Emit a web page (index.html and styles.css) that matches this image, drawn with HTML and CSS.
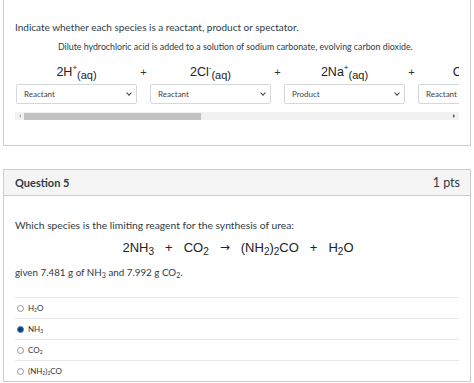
FILE: index.html
```html
<!DOCTYPE html>
<html lang="en">
<head>
<meta charset="utf-8">
<title>Quiz</title>
<link rel="stylesheet" href="styles.css">
</head>
<body class="page">
  <section class="card card-top">
    <p class="prompt">Indicate whether each species is a reactant, product or spectator.</p>
    <p class="scenario">Dilute hydrochloric acid is added to a solution of sodium carbonate, evolving carbon dioxide.</p>
    <div class="scroller">
      <div class="eq-row">
        <div class="col">
          <div class="term">2H<span class="sp">+</span><span class="sb">(aq)</span></div>
          <div class="select"><span>Reactant</span><span class="chev"></span></div>
        </div>
        <div class="op">+</div>
        <div class="col">
          <div class="term">2Cl<span class="sp">-</span><span class="sb">(aq)</span></div>
          <div class="select"><span>Reactant</span><span class="chev"></span></div>
        </div>
        <div class="op">+</div>
        <div class="col">
          <div class="term">2Na<span class="sp">+</span><span class="sb">(aq)</span></div>
          <div class="select"><span>Product</span><span class="chev"></span></div>
        </div>
        <div class="op">+</div>
        <div class="col">
          <div class="term">CO<span class="sb">3</span><span class="sp">2-</span><span class="sb">(aq)</span></div>
          <div class="select"><span>Reactant</span><span class="chev"></span></div>
        </div>
        <div class="op">→</div>
        <div class="col">
          <div class="term">2Na<span class="sp">+</span><span class="sb">(aq)</span></div>
          <div class="select"><span>Spectator</span><span class="chev"></span></div>
        </div>
      </div>
    </div>
    <div class="scrollbar">
      <span class="arrow arrow-left"></span>
      <span class="thumb"></span>
      <span class="track-fill"></span>
      <span class="arrow arrow-right"></span>
    </div>
  </section>

  <section class="card card-q">
    <header class="q-header">
      <h2 class="q-title">Question 5</h2>
      <span class="q-pts">1 pts</span>
    </header>
    <div class="q-body">
      <p class="q-text">Which species is the limiting reagent for the synthesis of urea:</p>
      <div class="equation">
        <span>2NH<span class="esub">3</span></span>
        <span>+</span>
        <span>CO<span class="esub">2</span></span>
        <span class="yields">→</span>
        <span>(NH<span class="esub">2</span>)<span class="esub">2</span>CO</span>
        <span>+</span>
        <span>H<span class="esub">2</span>O</span>
      </div>
      <p class="given">given 7.481 g of NH<span class="gsub">3</span> and 7.992 g CO<span class="gsub">2</span>.</p>
      <ul class="options">
        <li class="option"><span class="radio"></span><span class="opt-text">H<span class="osub">2</span>O</span></li>
        <li class="option"><span class="radio radio-on"></span><span class="opt-text">NH<span class="osub">3</span></span></li>
        <li class="option"><span class="radio"></span><span class="opt-text">CO<span class="osub">2</span></span></li>
        <li class="option"><span class="radio"></span><span class="opt-text">(NH<span class="osub">2</span>)<span class="osub">2</span>CO</span></li>
      </ul>
    </div>
  </section>
</body>
</html>
```

FILE: styles.css
```css
* { box-sizing: border-box; }

.page {
  margin: 0;
  padding: 0 3px;
  background: #ffffff;
  font-family: Lato, "Open Sans", sans-serif;
  color: #2d3b45;
  overflow: hidden;
}

.card {
  width: 468px;
  border: 1px solid #c7cdd1;
  background: #fff;
}

.card-top {
  margin-top: -1px;
  padding: 21px 11px 25px;
}

.prompt {
  margin: 0;
  font-size: 10px;
  line-height: 12px;
}

.scenario {
  margin: 8px 0 0;
  padding-left: 43px;
  font-size: 8.8px;
  line-height: 12px;
}

.scroller {
  margin-top: 9px;
  width: 444px;
  overflow: hidden;
}

.eq-row {
  display: flex;
  align-items: flex-start;
  padding-left: 1px;
  width: max-content;
}

.col {
  width: 121px;
  flex: none;
  display: flex;
  flex-direction: column;
}

.term {
  height: 20px;
  display: flex;
  align-items: center;
  justify-content: center;
  font-family: "Liberation Sans", Arial, sans-serif;
  font-size: 12.5px;
  color: #222;
}

.sp {
  font-size: 8px;
  position: relative;
  top: -5px;
}

.sb {
  font-size: 11px;
  position: relative;
  top: 3px;
}

.op {
  width: 13px;
  flex: none;
  height: 20px;
  display: flex;
  align-items: center;
  justify-content: center;
  font-family: "Liberation Sans", Arial, sans-serif;
  font-size: 11px;
  color: #333;
}

.select {
  margin-top: 2px;
  height: 20px;
  border: 1px solid #d4d8db;
  border-radius: 2px;
  background: #fff;
  display: flex;
  align-items: center;
  justify-content: space-between;
  padding: 0 5px 0 7px;
  font-size: 8px;
  color: #444;
}

.chev {
  width: 4px;
  height: 4px;
  border-right: 1.2px solid #444;
  border-bottom: 1.2px solid #444;
  transform: rotate(45deg);
  margin-top: -2px;
}

.scrollbar {
  margin-top: 8px;
  width: 444px;
  height: 8px;
  background: #f1f1f1;
  display: flex;
  align-items: center;
}

.arrow {
  width: 0;
  height: 0;
  flex: none;
  border-top: 2px solid transparent;
  border-bottom: 2px solid transparent;
}

.arrow-left {
  margin: 0 3px 0 4px;
  border-right: 2px solid #b3b3b3;
}

.arrow-right {
  margin: 0 4px 0 3px;
  border-left: 2px solid #505050;
}

.thumb {
  width: 177px;
  height: 7px;
  background: #c1c1c1;
  flex: none;
}

.track-fill {
  flex: 1;
}

.card-q {
  margin-top: 23px;
}

.q-header {
  height: 26px;
  background: #f5f5f5;
  border-bottom: 1px solid #c7cdd1;
  display: flex;
  align-items: center;
  justify-content: space-between;
  padding: 0 10px 0 11px;
}

.q-title {
  margin: 0;
  font-size: 11px;
  font-weight: 700;
  color: #2d3b45;
}

.q-pts {
  font-size: 12.5px;
  color: #2d3b45;
}

.q-body {
  padding: 23px 11px 0;
}

.q-text {
  margin: 0;
  font-size: 10.3px;
  line-height: 12px;
}

.equation {
  margin-top: 6px;
  height: 20px;
  display: flex;
  justify-content: center;
  align-items: center;
  gap: 11px;
  font-family: "Liberation Sans", Arial, sans-serif;
  font-size: 13px;
  color: #222;
  padding-left: 2px;
}

.yields {
  font-family: "DejaVu Sans", sans-serif;
  font-size: 12px;
}

.esub {
  font-size: 10px;
  position: relative;
  top: 3px;
}

.given {
  margin: 9px 0 0;
  font-size: 9.8px;
  line-height: 12px;
}

.gsub {
  font-size: 7px;
  position: relative;
  top: 2px;
}

.options {
  list-style: none;
  margin: 18px 0 0;
  padding: 0;
}

.option {
  height: 21px;
  border-top: 1px solid #e4e6e8;
  display: flex;
  align-items: center;
  padding-left: 2px;
  gap: 4px;
}

.radio {
  width: 7px;
  height: 7px;
  border-radius: 50%;
  border: 1px solid #8f969b;
  background: #fff;
  flex: none;
}

.radio-on {
  border: 1px solid #4f7fb6;
  background: #0f3f78;
}

.opt-text {
  font-size: 8px;
  color: #333;
}

.osub {
  font-size: 5px;
  position: relative;
  top: 1px;
}
```
